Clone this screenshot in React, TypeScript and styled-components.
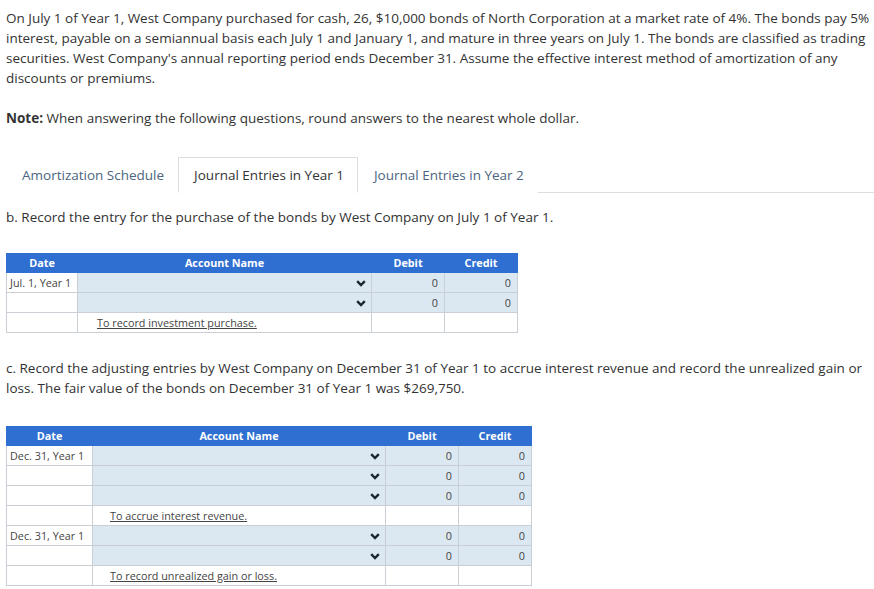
import React from 'react';
import styled, { createGlobalStyle } from 'styled-components';

const GlobalStyle = createGlobalStyle`
  body {
    margin: 0;
    background: #fff;
    font-family: 'Open Sans', 'Liberation Sans', sans-serif;
    color: #333;
  }
`;

const Page = styled.div`
  padding: 8px 0 0 6px;
  font-size: 13.5px;
  line-height: 20px;
`;

const Paragraph = styled.p`
  margin: 0 0 20px 0;
`;

const Question = styled.p<{ $top: number; $bottom: number }>`
  margin: ${(p) => p.$top}px 6px ${(p) => p.$bottom}px 0;
`;

const TabBar = styled.div`
  display: flex;
  margin-top: 29px;
  border-bottom: 1px solid #dedede;
`;

const Tab = styled.div<{ $active?: boolean }>`
  height: 34px;
  line-height: 34px;
  padding: 0 13px 0 15px;
  margin-bottom: -1px;
  color: ${(p) => (p.$active ? '#333' : '#4b6580')};
  background: #fff;
  border: 1px solid ${(p) => (p.$active ? '#dedede' : 'transparent')};
  border-bottom-color: ${(p) => (p.$active ? '#fff' : 'transparent')};
`;

const JournalTable = styled.table<{ $width: number }>`
  width: ${(p) => p.$width}px;
  border-collapse: collapse;
  table-layout: fixed;
  font-size: 10.8px;
  line-height: 14px;
`;

const HeadCell = styled.th`
  background: #2f6fd1;
  color: #fff;
  font-weight: 700;
  height: 18px;
  padding: 0;
  text-align: center;
  border: 1px solid #2f6fd1;
`;

const Cell = styled.td<{ $filled?: boolean }>`
  height: 19px;
  padding: 0;
  border: 1px solid #c9cfd4;
  background: ${(p) => (p.$filled ? '#dce8f1' : '#fff')};
`;

const DateCell = styled(Cell)`
  padding-left: 3px;
  color: #444;
  white-space: nowrap;
`;

const AccountCell = styled(Cell)`
  position: relative;
`;

const Chevron = styled.svg`
  position: absolute;
  right: 5px;
  top: 50%;
  margin-top: -3px;
`;

const AmountCell = styled(Cell)`
  text-align: right;
  padding-right: 6px;
  color: #444;
`;

const Memo = styled.span<{ $indent: number }>`
  display: block;
  padding-left: ${(p) => p.$indent}px;
  text-decoration: underline;
  color: #444;
`;

type Row =
  | { kind: 'entry'; date?: string }
  | { kind: 'memo'; text: string };

function ChevronIcon() {
  return (
    <Chevron width="10" height="7" viewBox="0 0 10 7">
      <polyline points="1.2,1.2 5,5 8.8,1.2" fill="none" stroke="#1c2630" strokeWidth="2.4" />
    </Chevron>
  );
}

function Journal({
  rows,
  widths,
  indent,
}: {
  rows: Row[];
  widths: number[];
  indent: number;
}) {
  const total = widths.reduce((a, b) => a + b, 0);
  return (
    <JournalTable $width={total}>
      <colgroup>
        {widths.map((w, i) => (
          <col key={i} style={{ width: w }} />
        ))}
      </colgroup>
      <thead>
        <tr>
          <HeadCell>Date</HeadCell>
          <HeadCell>Account Name</HeadCell>
          <HeadCell>Debit</HeadCell>
          <HeadCell>Credit</HeadCell>
        </tr>
      </thead>
      <tbody>
        {rows.map((row, i) =>
          row.kind === 'entry' ? (
            <tr key={i}>
              <DateCell>{row.date}</DateCell>
              <AccountCell $filled>
                <ChevronIcon />
              </AccountCell>
              <AmountCell $filled>0</AmountCell>
              <AmountCell $filled>0</AmountCell>
            </tr>
          ) : (
            <tr key={i}>
              <DateCell />
              <Cell>
                <Memo $indent={indent}>{row.text}</Memo>
              </Cell>
              <Cell />
              <Cell />
            </tr>
          )
        )}
      </tbody>
    </JournalTable>
  );
}

const purchaseRows: Row[] = [
  { kind: 'entry', date: 'Jul. 1, Year 1' },
  { kind: 'entry' },
  { kind: 'memo', text: 'To record investment purchase.' },
];

const adjustingRows: Row[] = [
  { kind: 'entry', date: 'Dec. 31, Year 1' },
  { kind: 'entry' },
  { kind: 'entry' },
  { kind: 'memo', text: 'To accrue interest revenue.' },
  { kind: 'entry', date: 'Dec. 31, Year 1' },
  { kind: 'entry' },
  { kind: 'memo', text: 'To record unrealized gain or loss.' },
];

export default function App() {
  return (
    <Page>
      <GlobalStyle />
      <Paragraph>
        On July 1 of Year 1, West Company purchased for cash, 26, $10,000 bonds of North
        Corporation at a market rate of 4%. The bonds pay 5% interest, payable on a semiannual
        basis each July 1 and January 1, and mature in three years on July 1. The bonds are
        classified as trading securities. West Company's annual reporting period ends December
        31. Assume the effective interest method of amortization of any discounts or premiums.
      </Paragraph>
      <Paragraph>
        <strong>Note:</strong> When answering the following questions, round answers to the
        nearest whole dollar.
      </Paragraph>
      <TabBar>
        <Tab>Amortization Schedule</Tab>
        <Tab $active>Journal Entries in Year 1</Tab>
        <Tab>Journal Entries in Year 2</Tab>
      </TabBar>
      <Question $top={14} $bottom={26}>
        b. Record the entry for the purchase of the bonds by West Company on July 1 of Year 1.
      </Question>
      <Journal rows={purchaseRows} widths={[71, 294, 73, 73]} indent={19} />
      <Question $top={25} $bottom={28}>
        c. Record the adjusting entries by West Company on December 31 of Year 1 to accrue
        interest revenue and record the unrealized gain or loss. The fair value of the bonds on
        December 31 of Year 1 was $269,750.
      </Question>
      <Journal rows={adjustingRows} widths={[86, 293, 73, 73]} indent={17} />
    </Page>
  );
}
